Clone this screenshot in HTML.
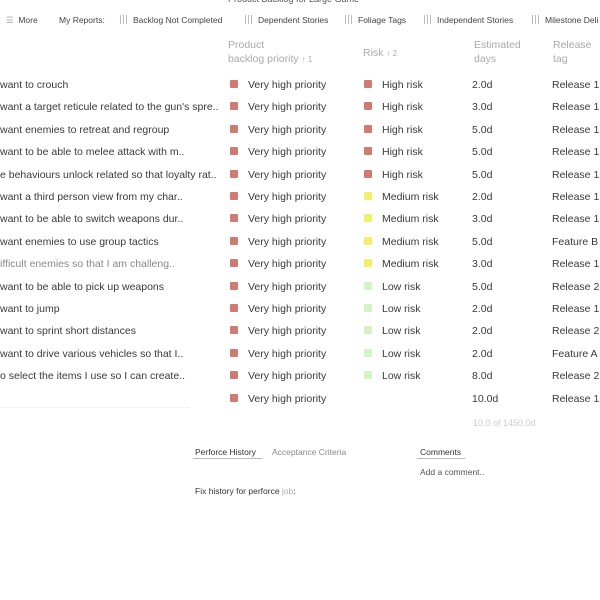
<html><head><style>
body{margin:0;width:600px;height:600px;overflow:hidden;background:#fff;font-family:"Liberation Sans",sans-serif;font-size:10.5px;color:#3a3a3a;position:relative}
.a{position:absolute;white-space:nowrap}
.sq{position:absolute;width:8px;height:8px;border-radius:1px}
.h{color:#aaa;font-size:10.5px;line-height:14px}
.tb{font-size:8.5px;color:#444}
.bar{display:inline-block;width:8px;height:9px;margin-right:5px;vertical-align:-1px;background:linear-gradient(90deg,#bbb 0 1px,transparent 1px 3px,#bbb 3px 4px,transparent 4px 6px,#bbb 6px 7px,transparent 7px)}
</style></head><body>
<div class="a" style="left:228px;top:-6px;font-size:9px;color:#555">Product Backlog for Large Game</div>
<div class="a tb" style="left:6px;top:15px"><span style="color:#aaa">☰</span>&nbsp; More</div>
<div class="a tb" style="left:59px;top:15px">My Reports:</div>
<div class="a tb" style="left:120px;top:15px"><span class="bar"></span>Backlog Not Completed</div>
<div class="a tb" style="left:245px;top:15px"><span class="bar"></span>Dependent Stories</div>
<div class="a tb" style="left:345px;top:15px"><span class="bar"></span>Foliage Tags</div>
<div class="a tb" style="left:424px;top:15px"><span class="bar"></span>Independent Stories</div>
<div class="a tb" style="left:532px;top:15px"><span class="bar"></span>Milestone Deli</div>
<div class="a h" style="left:228px;top:38px">Product<br>backlog priority <span style="font-size:8px">↑ 1</span></div>
<div class="a h" style="left:363px;top:46px">Risk <span style="font-size:8px">↑ 2</span></div>
<div class="a h" style="left:474px;top:38px">Estimated<br>days</div>
<div class="a h" style="left:553px;top:38px">Release<br>tag</div>
<div id="rows"></div>
<div class="a" style="left:0;top:407px;width:190px;height:1px;background:#f2f2f2"></div>
<div class="a" style="left:473px;top:418px;color:#ccc;font-size:9px">10.0 of 1450.0d</div>
<div class="a" style="left:195px;top:447px;font-size:8.5px;color:#333">Perforce History</div>
<div class="a" style="left:193px;top:458px;width:69px;height:1px;background:#bbb"></div>
<div class="a" style="left:272px;top:447px;font-size:8.5px;color:#888">Acceptance Criteria</div>
<div class="a" style="left:420px;top:447px;font-size:8.5px;color:#333">Comments</div>
<div class="a" style="left:417px;top:458px;width:48px;height:1px;background:#bbb"></div>
<div class="a" style="left:420px;top:467px;font-size:8.5px;color:#555">Add a comment..</div>
<div class="a" style="left:195px;top:486px;font-size:8.5px;color:#333">Fix history for perforce <span style="color:#aac">job</span>:</div>
<script>
var R=[["want to crouch","H","2.0d","Release 1"],["want a target reticule related to the gun's spre..","H","3.0d","Release 1"],["want enemies to retreat and regroup","H","5.0d","Release 1"],["want to be able to melee attack with m..","H","5.0d","Release 1"],["e behaviours unlock related so that loyalty rat..","H","5.0d","Release 1"],["want a third person view from my char..","M","2.0d","Release 1"],["want to be able to switch weapons dur..","M","3.0d","Release 1"],["want enemies to use group tactics","M","5.0d","Feature B"],["ifficult enemies so that I am challeng..","M","3.0d","Release 1"],["want to be able to pick up weapons","L","5.0d","Release 2"],["want to jump","L","2.0d","Release 1"],["want to sprint short distances","L","2.0d","Release 2"],["want to drive various vehicles so that I..","L","2.0d","Feature A"],["o select the items I use so I can create..","L","8.0d","Release 2"],["","","10.0d","Release 1"]];
var c={H:["#d07a72","High risk"],M:["#f3ef6a","Medium risk"],L:["#d2f3c6","Low risk"]},s="";
R.forEach(function(r,i){var y=84+i*22.4-5;
if(r[0])s+='<div class="a" style="left:0;top:'+y+'px;'+(i==8?'color:#888':'')+'">'+r[0]+'</div>';
s+='<div class="sq" style="left:230px;top:'+(y+1)+'px;background:#d07a72"></div><div class="a" style="left:248px;top:'+y+'px">Very high priority</div>';
if(r[1])s+='<div class="sq" style="left:364px;top:'+(y+1)+'px;background:'+c[r[1]][0]+'"></div><div class="a" style="left:382px;top:'+y+'px">'+c[r[1]][1]+'</div>';
s+='<div class="a" style="left:472px;top:'+y+'px">'+r[2]+'</div><div class="a" style="left:552px;top:'+y+'px">'+r[3]+'</div>';});
document.getElementById('rows').innerHTML=s;
</script>
</body></html>
